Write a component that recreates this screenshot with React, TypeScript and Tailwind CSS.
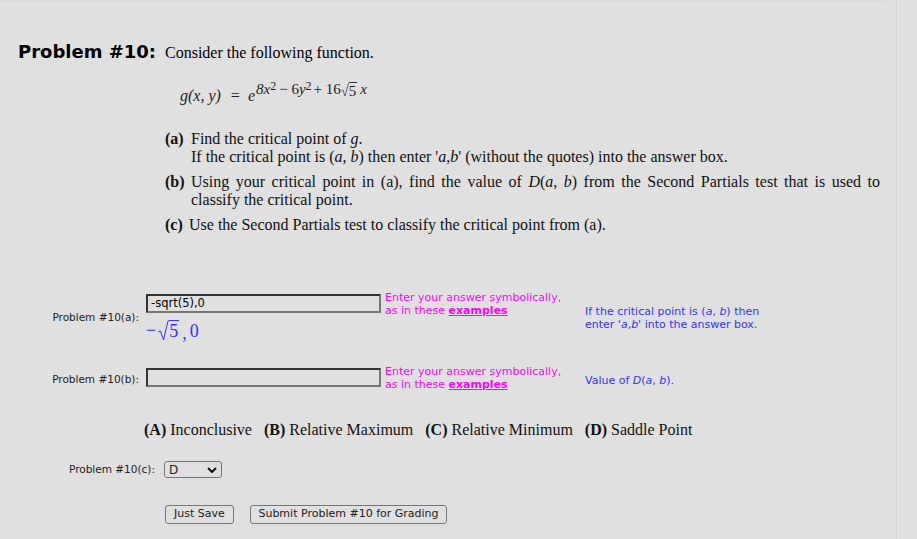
import React from 'react';

const serif = { fontFamily: '"Liberation Serif", serif' };

const Hint: React.FC = () => (
  <div className="text-[#ff00ff] text-[11px] leading-[13px]">
    <div>Enter your answer symbolically,</div>
    <div>
      as in these <a className="font-bold underline">examples</a>
    </div>
  </div>
);

const Field: React.FC<{ value: string }> = ({ value }) => (
  <div className="w-[235px] h-[19px] border-2 border-t-[#333333] border-l-[#333333] border-b-[#767676] border-r-[#767676] text-[11.5px] leading-[15px] pl-[3px] text-black">
    {value}
  </div>
);

const App: React.FC = () => {
  return (
    <div className="w-[917px] h-[539px] overflow-hidden bg-[#e0e0e0] text-black" style={{ fontFamily: '"DejaVu Sans", sans-serif' }}>
      <div className="w-[897px] h-[539px] border-r border-[#d6d6d6]">
        <div className="h-px w-[887px] bg-[#d9d9d9]"></div>

        <div className="flex items-baseline pt-[39px] pl-[18px]">
          <div className="w-[147px] text-[18px] leading-[24px] font-bold whitespace-nowrap">Problem #10:</div>
          <div className="text-[16px] leading-[24px] -mt-px" style={serif}>Consider the following function.</div>
        </div>

        <div className="flex items-start pl-[180px] pt-[12px] h-[48px] text-[16px] text-[#222222]" style={serif}>
          <span className="mt-[7px] italic">g(x, y)</span>
          <span className="mt-[7px] ml-[10px]">=</span>
          <span className="mt-[7px] ml-[8px] italic">e</span>
          <span className="flex items-start whitespace-nowrap leading-[20px] text-[15px] mt-[2px] ml-px">
            <span className="italic">8x</span><span className="text-[12px] leading-[14px]">2</span>
            <span className="ml-[3px]">− 6<span className="italic">y</span></span><span className="text-[12px] leading-[14px]">2</span>
            <span className="ml-[2px]">+ 16</span>
            <svg width="8" height="20" viewBox="0 0 9 20" fill="none" stroke="#333333" strokeWidth="0.8">
              <path d="M0.5 12 L2 11 L4.5 18 L8.5 3.5 L9 3.5" />
            </svg>
            <span className="border-t border-[#333333] mt-[3px] leading-[17px] h-[17px] pr-px">5</span>
            <span className="italic ml-[3px]">x</span>
          </span>
        </div>

        <div className="pl-[165px] pr-[16px] pt-[17px] text-[16px] leading-[18px] text-[#111111]" style={serif}>
          <div className="flex">
            <span className="font-bold w-[26px] shrink-0">(a)</span>
            <div>
              <div>Find the critical point of <i>g</i>.</div>
              <div>If the critical point is (<i>a</i>, <i>b</i>) then enter '<i>a</i>,<i>b</i>' (without the quotes) into the answer box.</div>
            </div>
          </div>
          <div className="flex mt-[7px]">
            <span className="font-bold w-[26px] shrink-0">(b)</span>
            <div className="flex-1">
              <div className="[text-align-last:justify]">Using your critical point in (a), find the value of <i>D</i>(<i>a</i>, <i>b</i>) from the Second Partials test that is used to</div>
              <div>classify the critical point.</div>
            </div>
          </div>
          <div className="flex mt-[7px]">
            <span className="font-bold w-[24px] shrink-0">(c)</span>
            <div>Use the Second Partials test to classify the critical point from (a).</div>
          </div>
        </div>

        <div className="grid grid-cols-[146px_239px_200px_auto] pt-[57px] text-[11px]">
          <div className="pt-[20px] pr-[7px] text-right leading-[13px] text-[10.5px] text-[#222222]">Problem #10(a):</div>
          <div className="pt-[3px]">
            <Field value="-sqrt(5),0" />
            <div className="flex items-start h-[45px] text-[#3333ff] text-[18px] leading-[20px] mt-[7px]" style={serif}>
              <span>−</span>
              <svg width="11" height="22" viewBox="0 0 11 22" className="ml-[2px]" fill="none" stroke="#3333ff" strokeWidth="1">
                <path d="M0 12 L2.5 11 L5.5 20 L10 1 L11 1" />
              </svg>
              <span className="border-t border-[#3333ff] h-[20px] leading-[21px] pr-[1px]">5</span>
              <span className="ml-[3px] mt-[3px]">,</span>
              <span className="ml-[3px] mt-[1px]">0</span>
            </div>
          </div>
          <div><Hint /></div>
          <div className="pt-[14px] text-[#3333ff] leading-[13px]">
            <div>If the critical point is (<i>a</i>, <i>b</i>) then</div>
            <div>enter '<i>a</i>,<i>b</i>' into the answer box.</div>
          </div>

          <div className="pt-[8px] pr-[7px] text-right leading-[13px] text-[10.5px] text-[#222222]">Problem #10(b):</div>
          <div className="pt-[3px]"><Field value="" /></div>
          <div><Hint /></div>
          <div className="pt-[9px] text-[#3333ff] leading-[13px]">Value of <i>D</i>(<i>a</i>, <i>b</i>).</div>
        </div>

        <div className="flex pl-[144px] pt-[29px] gap-[12px] text-[16px] leading-[20px] text-[#111111]" style={serif}>
          <span><b>(A)</b> Inconclusive</span>
          <span><b>(B)</b> Relative Maximum</span>
          <span><b>(C)</b> Relative Minimum</span>
          <span><b>(D)</b> Saddle Point</span>
        </div>

        <div className="flex items-center pl-[69px] pt-[21px] text-[10.5px] text-[#222222]">
          <span className="w-[95px]">Problem #10(c):</span>
          <div className="flex items-center justify-between w-[58px] h-[17px] border border-[#767676] rounded-[3px] pl-[4px] pr-[4px] text-[12px]">
            <span>D</span>
            <svg width="10" height="6" viewBox="0 0 10 6" fill="none" stroke="#111111" strokeWidth="2">
              <path d="M1 1 L5 5 L9 1" />
            </svg>
          </div>
        </div>

        <div className="flex pl-[165px] pt-[27px] gap-[16px] text-[11px] text-[#222222]">
          <button className="h-[19px] w-[69px] border border-[#767676] rounded-[3px]">Just Save</button>
          <button className="h-[19px] w-[197px] border border-[#767676] rounded-[3px]">Submit Problem #10 for Grading</button>
        </div>
      </div>
    </div>
  );
};

export default App;
